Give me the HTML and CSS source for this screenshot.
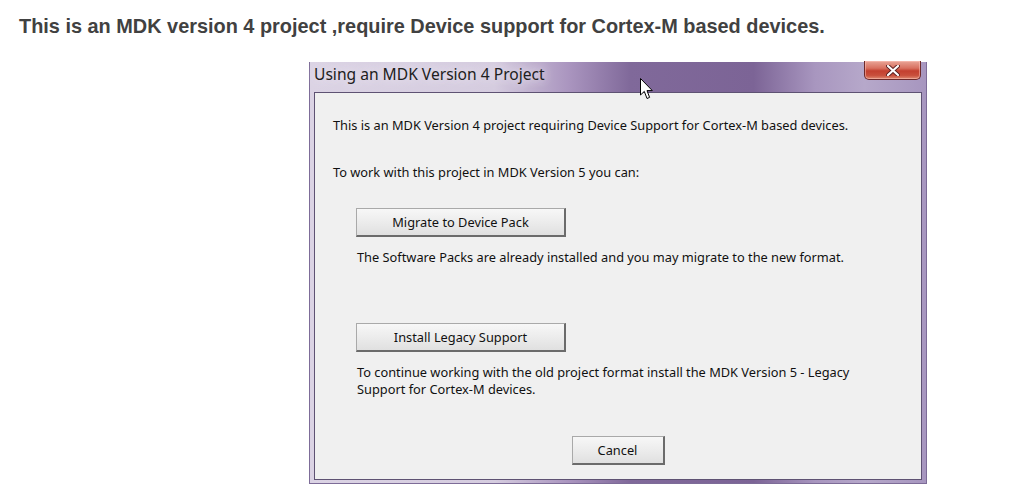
FILE: index.html
```html
<!DOCTYPE html>
<html>
<head>
<meta charset="utf-8">
<link rel="stylesheet" href="styles.css">
</head>
<body>
<h1 class="heading">This is an MDK version 4 project ,require Device support for Cortex-M based devices.</h1>
<div class="stage">
  <div class="window">
    <div class="titlebar">
      <span class="title">Using an MDK Version 4 Project</span>
      <button class="close" aria-label="Close">
        <svg width="14" height="11" viewBox="0 0 14 11"><path d="M2 1 L12 10 M12 1 L2 10" stroke="#5a2020" stroke-width="4" stroke-linecap="round"/><path d="M2 1 L12 10 M12 1 L2 10" stroke="#ffffff" stroke-width="2.2" stroke-linecap="round"/></svg>
      </button>
    </div>
    <div class="client">
      <p class="line">This is an MDK Version 4 project requiring Device Support for Cortex-M based devices.</p>
      <p class="line gap1">To work with this project in MDK Version 5 you can:</p>
      <div class="option first">
        <button class="btn wide">Migrate to Device Pack</button>
        <p class="line desc">The Software Packs are already installed and you may migrate to the new format.</p>
      </div>
      <div class="option second">
        <button class="btn wide">Install Legacy Support</button>
        <p class="line desc">To continue working with the old project format install the MDK Version 5 - Legacy<br>Support for Cortex-M devices.</p>
      </div>
      <div class="footer">
        <button class="btn cancel">Cancel</button>
      </div>
    </div>
    <svg class="cursor" width="14" height="23" viewBox="0 0 14 23"><path d="M0.5 0.5 L0.5 17 L4.3 13.4 L7 20.5 L9.6 19.4 L7 12.6 L12.3 12.6 Z" fill="#fff" stroke="#000" stroke-width="1" stroke-linejoin="round"/></svg>
  </div>
</div>
</body>
</html>
```
FILE: styles.css
```css
html, body {
  margin: 0;
  padding: 0;
  background: #ffffff;
}

.heading {
  margin: 0;
  padding: 14px 0 0 19px;
  font-family: "Liberation Sans", Arial, sans-serif;
  font-weight: bold;
  font-size: 19.9px;
  line-height: 24px;
  color: #414141;
}

.stage {
  padding: 24px 0 0 309px;
}

.window {
  position: relative;
  width: 618px;
  height: 422px;
  box-sizing: border-box;
  display: flex;
  flex-direction: column;
  border: 1px solid #7d6c98;
  border-top: none;
  background: linear-gradient(90deg, #dbd3e4 0%, #d5ccdf 30%, #aa95bf 42%, #80699a 52%, #7c6496 72%, #a896bf 82%, #b6a8ca 90%, #a796bf 100%);
  padding: 0 4px 3px 4px;
}

.titlebar {
  height: 30px;
  flex: none;
  display: flex;
  align-items: flex-start;
  justify-content: space-between;
}

.title {
  font-family: "Segoe UI", "Noto Sans", sans-serif;
  font-size: 15.6px;
  line-height: 24px;
  color: #202020;
  text-shadow: 0 0 8px #e8e2ee, 0 0 12px #e8e2ee;
}

.close {
  width: 57px;
  height: 19px;
  margin: -1px 1px 0 0;
  padding: 0;
  border: 1px solid #6d2a2a;
  border-top: none;
  border-radius: 0 0 5px 5px;
  background: linear-gradient(180deg, #e9a597 0%, #d8705f 40%, #c3402f 55%, #c9503c 80%, #de8a72 100%);
  box-shadow: inset 0 0 0 1px rgba(255, 200, 190, 0.5);
  display: flex;
  align-items: center;
  justify-content: center;
}

.client {
  flex: 1;
  background: #f0f0f0;
  border: 1px solid #5e5273;
  padding: 24px 0 0 18px;
  font-family: "Segoe UI", "Noto Sans", sans-serif;
  font-size: 12.8px;
  color: #111111;
  display: flex;
  flex-direction: column;
}

.line {
  margin: 0;
  line-height: 17px;
}

.gap1 {
  margin-top: 30px;
}

.option {
  padding-left: 23px;
  display: flex;
  flex-direction: column;
  align-items: flex-start;
}

.option.first {
  margin-top: 27px;
}

.option.second {
  margin-top: 57px;
}

.btn {
  font-family: "Segoe UI", "Noto Sans", sans-serif;
  font-size: 12.8px;
  color: #111111;
  box-sizing: border-box;
  border: 1px solid #a9a9a9;
  border-right: 2px solid #6b6b6b;
  border-bottom: 2px solid #6b6b6b;
  background: linear-gradient(180deg, #f7f7f7 0%, #ececec 50%, #e0e0e0 100%);
  padding: 0;
}

.wide {
  width: 210px;
  height: 29px;
}

.desc {
  margin-top: 12px;
  padding-left: 1px;
}

.footer {
  margin-top: 38px;
  display: flex;
  justify-content: center;
  padding-right: 18px;
}

.cancel {
  width: 93px;
  height: 29px;
}

.cursor {
  position: absolute;
  left: 330px;
  top: 16px;
}
```
